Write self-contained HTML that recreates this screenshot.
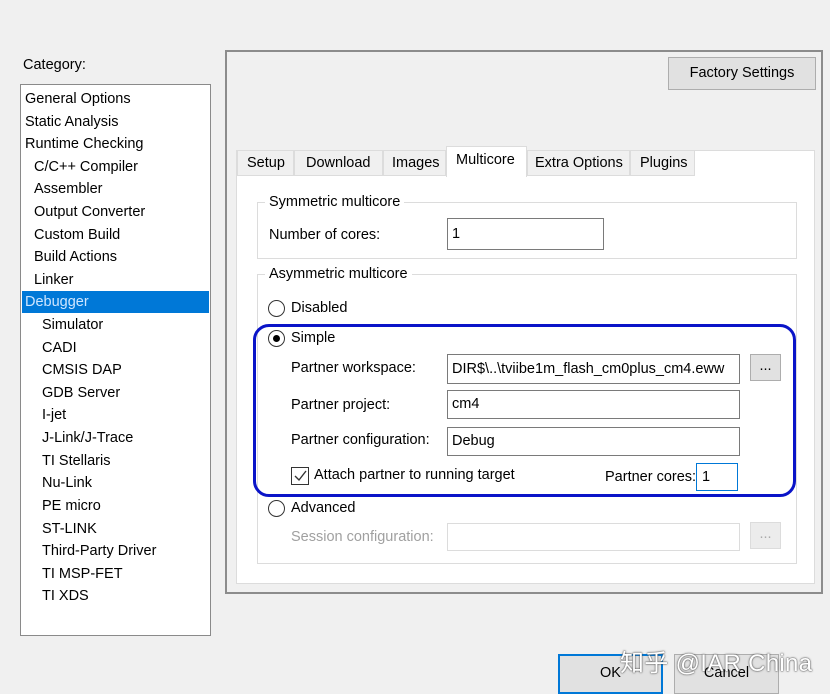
<!DOCTYPE html>
<html><head><meta charset="utf-8"><style>
*{box-sizing:border-box;margin:0;padding:0}
body{width:830px;height:692px;background:#f0f0f0;font-family:"Liberation Sans","Noto Sans CJK SC",sans-serif;font-size:14.5px;color:#000;position:relative;overflow:hidden}
.a{position:absolute;white-space:nowrap}
.lb{left:20px;top:84px;width:191px;height:552px;background:#fff;border:1px solid #8a8a8a}
.it{position:absolute;left:4px;height:22px;line-height:22px}
.in{left:13px}.in2{left:21px}
.box{background:#fff;border:1px solid #7a7a7a;height:32px;line-height:30px;padding-left:4px}
.btn{background:#e1e1e1;border:1px solid #adadad;text-align:center}
.grp{border:1px solid #dcdcdc}
.gl{background:#fff;padding:0 4px}
.rad{width:17px;height:17px;border:1px solid #333;border-radius:50%;background:#fff}
</style></head><body>
<div class="a" style="left:23px;top:57px">Category:</div>
<div class="a lb">
<div class="it" style="top:3px">General Options</div>
<div class="it" style="top:26px">Static Analysis</div>
<div class="it" style="top:48px">Runtime Checking</div>
<div class="it in" style="top:71px">C/C++ Compiler</div>
<div class="it in" style="top:93px">Assembler</div>
<div class="it in" style="top:116px">Output Converter</div>
<div class="it in" style="top:139px">Custom Build</div>
<div class="it in" style="top:161px">Build Actions</div>
<div class="it in" style="top:184px">Linker</div>
<div style="position:absolute;left:1px;top:206px;width:187px;height:22px;background:#0078d7"></div>
<div class="it" style="top:206px;color:#cfe6ff">Debugger</div>
<div class="it in2" style="top:229px">Simulator</div>
<div class="it in2" style="top:252px">CADI</div>
<div class="it in2" style="top:274px">CMSIS DAP</div>
<div class="it in2" style="top:297px">GDB Server</div>
<div class="it in2" style="top:319px">I-jet</div>
<div class="it in2" style="top:342px">J-Link/J-Trace</div>
<div class="it in2" style="top:365px">TI Stellaris</div>
<div class="it in2" style="top:387px">Nu-Link</div>
<div class="it in2" style="top:410px">PE micro</div>
<div class="it in2" style="top:433px">ST-LINK</div>
<div class="it in2" style="top:455px">Third-Party Driver</div>
<div class="it in2" style="top:478px">TI MSP-FET</div>
<div class="it in2" style="top:500px">TI XDS</div>
</div>

<div class="a" style="left:225px;top:50px;width:598px;height:544px;border:2px solid #8c8c8c"></div>
<div class="a btn" style="left:668px;top:57px;width:148px;height:33px;line-height:31px">Factory Settings</div>

<div class="a" style="left:236px;top:150px;width:579px;height:434px;background:#fff;border:1px solid #dcdcdc"></div>
<div class="a" style="left:237px;top:150px;width:57px;height:26px;background:#f0f0f0;border:1px solid #dcdcdc;line-height:24px;padding-left:9px">Setup</div>
<div class="a" style="left:294px;top:150px;width:89px;height:26px;background:#f0f0f0;border:1px solid #dcdcdc;line-height:24px;padding-left:11px">Download</div>
<div class="a" style="left:383px;top:150px;width:63px;height:26px;background:#f0f0f0;border:1px solid #dcdcdc;line-height:24px;padding-left:8px">Images</div>
<div class="a" style="left:446px;top:146px;width:81px;height:31px;background:#fff;border:1px solid #dcdcdc;border-bottom:none;line-height:26px;padding-left:9px">Multicore</div>
<div class="a" style="left:527px;top:150px;width:103px;height:26px;background:#f0f0f0;border:1px solid #dcdcdc;line-height:24px;padding-left:7px">Extra Options</div>
<div class="a" style="left:630px;top:150px;width:65px;height:26px;background:#f0f0f0;border:1px solid #dcdcdc;line-height:24px;padding-left:9px">Plugins</div>

<div class="a grp" style="left:257px;top:202px;width:540px;height:57px"></div>
<div class="a gl" style="left:265px;top:194px">Symmetric multicore</div>
<div class="a" style="left:269px;top:227px">Number of cores:</div>
<div class="a box" style="left:447px;top:218px;width:157px">1</div>

<div class="a grp" style="left:257px;top:274px;width:540px;height:290px"></div>
<div class="a gl" style="left:265px;top:266px">Asymmetric multicore</div>
<div class="a rad" style="left:268px;top:300px"></div>
<div class="a" style="left:291px;top:300px">Disabled</div>
<div class="a rad" style="left:268px;top:330px"></div>
<div class="a" style="left:273px;top:335px;width:7px;height:7px;border-radius:50%;background:#000"></div>
<div class="a" style="left:291px;top:330px">Simple</div>
<div class="a" style="left:291px;top:360px">Partner workspace:</div>
<div class="a box" style="left:447px;top:354px;width:293px;height:30px;line-height:28px;overflow:hidden">DIR$\..\tviibe1m_flash_cm0plus_cm4.eww</div>
<div class="a btn" style="left:750px;top:354px;width:31px;height:27px;line-height:22px">...</div>
<div class="a" style="left:291px;top:397px">Partner project:</div>
<div class="a box" style="left:447px;top:390px;width:293px;height:29px;line-height:26px">cm4</div>
<div class="a" style="left:291px;top:432px">Partner configuration:</div>
<div class="a box" style="left:447px;top:427px;width:293px;height:29px;line-height:26px">Debug</div>
<div class="a" style="left:291px;top:467px;width:18px;height:18px;border:1px solid #333;background:#fff"></div>
<svg class="a" style="left:291px;top:467px" width="18" height="18"><path d="M4 9 L8 13 L15 4" fill="none" stroke="#333" stroke-width="1.4"/></svg>
<div class="a" style="left:314px;top:467px">Attach partner to running target</div>
<div class="a" style="left:605px;top:469px">Partner cores:</div>
<div class="a" style="left:696px;top:463px;width:42px;height:28px;border:1px solid #0078d7;background:#fff;line-height:26px;padding-left:5px">1</div>
<div class="a" style="left:253px;top:324px;width:543px;height:173px;border:3px solid #0a14c8;border-radius:16px"></div>
<div class="a rad" style="left:268px;top:500px"></div>
<div class="a" style="left:291px;top:500px">Advanced</div>
<div class="a" style="left:291px;top:529px;color:#a0a0a0">Session configuration:</div>
<div class="a" style="left:447px;top:523px;width:293px;height:28px;border:1px solid #dcdcdc;background:#fff"></div>
<div class="a" style="left:750px;top:522px;width:31px;height:27px;background:#ececec;border:1px solid #dcdcdc;text-align:center;color:#aaa;line-height:22px">...</div>

<div class="a btn" style="left:558px;top:654px;width:105px;height:40px;border:2px solid #0078d7;line-height:34px">OK</div>
<div class="a btn" style="left:674px;top:654px;width:105px;height:40px;line-height:36px">Cancel</div>
<div class="a" style="left:620px;top:643px;font-size:24px;letter-spacing:0.3px;color:#fff;text-shadow:0 0 2px #555,0 0 1px #333">知乎 @IAR China</div>
</body></html>
